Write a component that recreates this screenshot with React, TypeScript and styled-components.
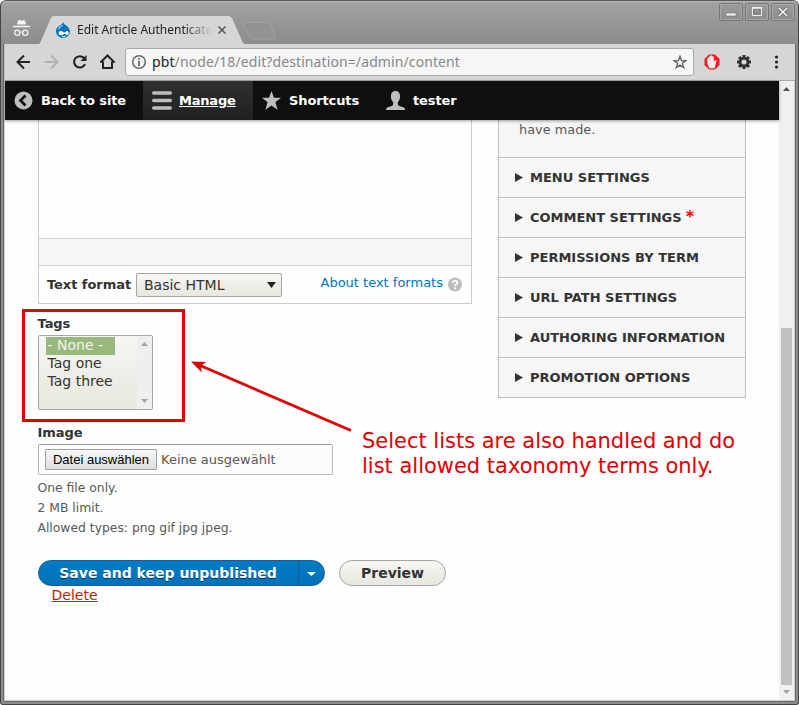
import React from 'react';
import styled, { createGlobalStyle } from 'styled-components';

const Global = createGlobalStyle`
  * { box-sizing: border-box; }
  html, body { margin: 0; padding: 0; background: #fff; overflow: hidden; }
  body { font-family: "DejaVu Sans", sans-serif; color: #333; }
  svg { display: block; flex: none; }
  p { margin: 0; }
`;

const Window = styled.div`
  position: relative;
  width: 799px;
  height: 705px;
  display: flex;
  flex-direction: column;
  overflow: hidden;
  border: 1px solid #454343;
  border-top-color: #5a5a5a;
  border-radius: 6px 6px 3px 3px;
  background: #8c8c8c;
  padding: 0 3px 3px;
`;

const TitleBar = styled.header`
  height: 43px;
  flex: none;
  display: flex;
  margin: 0 -3px;
  padding-left: 12px;
  background: linear-gradient(#b5b5b5 0, #a1a1a1 2px, #8c8c8c 100%);
`;

const Incognito = styled.div`
  width: 26px;
  padding-top: 18px;
`;

const TabShape = styled.div`
  width: 206px;
  height: 28px;
  margin-top: 15px;
  padding: 0 16px 0 17px;
  display: flex;
  align-items: center;
  background: #d6d6d6;
  clip-path: polygon(0 100%, 1px 27px, 12px 2px, 14px 0, 190px 0, 193px 2px, 204px 27px, 206px 100%);
`;

const TabTitle = styled.span`
  width: 141px;
  margin-left: 7px;
  white-space: nowrap;
  font: 12px/18px "Noto Sans", sans-serif;
  color: #222;
  mask-image: linear-gradient(90deg, #000 108px, transparent 135px);
`;

const NewTab = styled.div`
  margin: 20px 0 0 -3px;
`;

const WindowButtons = styled.div`
  margin: 2px 3px 0 auto;
  display: flex;
  gap: 2px;
`;

const WindowButton = styled.span`
  width: 24px;
  height: 18px;
  display: grid;
  place-items: center;
  border: 1px solid #767676;
  border-radius: 2px;
  background: linear-gradient(#9b9b9b, #8d8d8d);
  box-shadow: inset 0 0 0 1px #a9a9a9;
`;

const NavBar = styled.nav`
  height: 37px;
  flex: none;
  display: flex;
  align-items: center;
  padding: 0 11px 1px 11px;
  background: #d6d6d6;
  border-bottom: 1px solid #a9a9a9;
  border-left: 1px solid #c4c4c4;
  box-shadow: -1px 0 #6b6969, 1px 0 #6b6969;
`;

const NavButtons = styled.div`
  width: 109px;
  display: flex;
  gap: 13px;
`;

const AddressBar = styled.div`
  width: 569px;
  height: 28px;
  display: flex;
  align-items: center;
  padding: 0 6px 0 5px;
  border: 1px solid #a8a8a8;
  border-radius: 3px;
  background: #f6f6f6;
`;

const Url = styled.span`
  flex: 1;
  margin-left: 5px;
  font: 14px/20px "Noto Sans", sans-serif;
  letter-spacing: 0.1px;
  color: #888;
  b { font-weight: 400; color: #222; }
`;

const NavActions = styled.div`
  flex: 1;
  display: flex;
  align-items: center;
  padding-left: 10px;
  gap: 16px;
`;

const Viewport = styled.div`
  flex: 1;
  min-height: 0;
  display: flex;
  border: solid #cfcfcf;
  border-width: 0 1px 1px;
  box-shadow: -1px 0 #6b6969, 1px 0 #6b6969, 0 1px #6b6969;
  background: #fdfdfd;
`;

const Page = styled.div`
  width: 774px;
  display: flex;
  flex-direction: column;
`;

const AdminBar = styled.div`
  position: relative;
  height: 39px;
  flex: none;
  display: flex;
  background: #0f0f0f;
  box-shadow: 0 1px 3px 0 rgba(0, 0, 0, 0.4);
`;

const AdminItem = styled.a<{ $width: number; $active?: boolean }>`
  width: ${(p) => p.$width}px;
  display: flex;
  align-items: center;
  gap: ${(p) => (p.$active ? 7 : 8)}px;
  padding-left: 9px;
  color: #fff;
  font-size: 13px;
  font-weight: 700;
  letter-spacing: ${(p) => (p.$active ? -0.2 : -0.12)}px;
  text-decoration: ${(p) => (p.$active ? 'underline' : 'none')};
  background: ${(p) => (p.$active ? 'linear-gradient(#303030, #202020)' : 'none')};
  white-space: nowrap;
`;

const Columns = styled.div`
  flex: 1;
  min-height: 0;
  display: flex;
  align-items: flex-start;
  gap: 26px;
  padding-left: 33px;
`;

const Main = styled.main`
  width: 434px;
`;

const Editor = styled.section`
  height: 184px;
  border: 1px solid #ccc;
  border-top: 0;
  background: #fefefe;
`;

const EditorCanvas = styled.div`
  height: 118px;
`;

const EditorFooter = styled.div`
  height: 28px;
  background: #f6f6f6;
  border: solid #ccc;
  border-width: 1px 0;
`;

const FormatRow = styled.div`
  height: 37px;
  display: flex;
  align-items: center;
  padding: 1px 9px 0 8px;
`;

const Label = styled.label`
  display: block;
  font-size: 13px;
  line-height: 20px;
  font-weight: 700;
  letter-spacing: -0.05px;
  white-space: nowrap;
`;

const FieldLabel = styled(Label)`
  text-indent: -0.5px;
`;

const FormatSelect = styled.div`
  width: 146px;
  height: 24px;
  margin-left: auto;
  padding: 0 5px 0 7px;
  display: flex;
  align-items: center;
  justify-content: space-between;
  border: 1px solid #a6a6a6;
  border-radius: 2px;
  background: linear-gradient(#f6f6f3, #e7e7df);
  font-size: 14px;
`;

const FormatPicker = styled.div`
  width: 235px;
  display: flex;
  align-items: center;
`;

const AboutLink = styled.a`
  margin: -6px 5px 0 auto;
  font-size: 13px;
  color: #0074bd;
  white-space: nowrap;
`;

const TagsField = styled.div`
  margin-top: 10px;
`;

const ListBox = styled.div`
  width: 115px;
  height: 75px;
  margin-top: 1px;
  display: flex;
  border: 1px solid #a6a6a6;
  border-radius: 2px;
  background: linear-gradient(#f6f6f3, #e7e7df);
`;

const Options = styled.div`
  width: 98px;
  padding: 1px 0 0 7px;
`;

const Option = styled.div<{ $selected?: boolean }>`
  width: 69px;
  height: 18px;
  padding-left: 1.5px;
  font-size: 14px;
  line-height: 17px;
  white-space: nowrap;
  color: ${(p) => (p.$selected ? '#f2f5ee' : '#333')};
  background: ${(p) => (p.$selected ? '#9ab87c' : 'none')};
`;

const ListScroll = styled.div`
  flex: 1;
  display: flex;
  flex-direction: column;
  justify-content: space-between;
  align-items: center;
  padding: 6px 0;
  background: #efefef;
`;

const ImageField = styled.div`
  margin-top: 13px;
`;

const FileInput = styled.div`
  width: 295px;
  height: 31px;
  margin-top: 1px;
  padding-left: 6px;
  display: flex;
  align-items: center;
  gap: 4px;
  border: 1px solid #b8b8b8;
  border-top-color: #999;
  border-radius: 2px;
  background: #fcfcfa;
  font-size: 13px;
  color: #595959;
`;

const FileButton = styled.span`
  width: 112px;
  height: 21px;
  border: 1px solid #a0a0a0;
  border-radius: 1px;
  background: linear-gradient(#f6f6f6, #dedede);
  font: 13px/19px "Liberation Sans", Arial, sans-serif;
  text-align: center;
  color: #000;
  white-space: nowrap;
`;

const Description = styled.div`
  margin-top: 3px;
  font-size: 12.35px;
  line-height: 20px;
  text-indent: -0.5px;
  color: #595959;
`;

const Actions = styled.div`
  margin-top: 22px;
  display: flex;
  gap: 14px;
`;

const SplitButton = styled.div`
  width: 287px;
  height: 26px;
  display: flex;
  border: 1px solid #1e5c90;
  border-radius: 13px;
  background: linear-gradient(#007bc6, #0071b8);
  color: #fff;
  font-size: 14px;
  font-weight: 700;
  line-height: 24px;
  text-shadow: 0 1px rgba(0, 0, 0, 0.5);
  white-space: nowrap;
`;

const SplitMain = styled.span`
  width: 260px;
  padding-right: 1px;
  text-align: center;
  border-right: 1px solid #1e5c90;
`;

const SplitArrow = styled.span`
  flex: 1;
  display: grid;
  place-items: center;
  padding: 2px 1px 0 0;
`;

const PreviewButton = styled.span`
  width: 107px;
  height: 26px;
  border: 1px solid #a6a6a6;
  border-radius: 13px;
  background: linear-gradient(#f6f6f3, #e7e7df);
  font-size: 14px;
  font-weight: 700;
  line-height: 24px;
  text-align: center;
`;

const DeleteLink = styled.a`
  display: block;
  margin-left: 13.5px;
  font-size: 14px;
  line-height: 18px;
  color: #c72100;
  text-decoration: underline;
`;

const Sidebar = styled.aside`
  width: 248px;
  height: 278px;
  border: 1px solid #bfbfbf;
  border-top: 0;
  background: #f6f6f6;
`;

const SideNote = styled.p`
  height: 37px;
  padding-left: 20px;
  font-size: 12.9px;
  line-height: 20px;
  color: #595959;
`;

const Summary = styled.div`
  height: 40px;
  display: flex;
  align-items: center;
  gap: 7px;
  padding-left: 16px;
  border-top: 1px solid #bfbfbf;
  box-shadow: inset 0 1px #fff;
  font-size: 13px;
  font-weight: 700;
  white-space: nowrap;
  svg { margin-bottom: 1px; }
`;

const Required = styled.span`
  margin: 0 0 1px -3px;
  color: #f00;
  font-size: 16px;
  line-height: 18px;
`;

const ScrollTrack = styled.div`
  width: 15px;
  display: flex;
  flex-direction: column;
  align-items: center;
  padding-top: 6px;
  background: #f0f0f0;
`;

const ScrollThumb = styled.div`
  width: 11px;
  height: 357px;
  margin: 237px 0 5px;
  background: #c1c1c1;
`;

const RedFrame = styled.div`
  position: absolute;
  left: 21px;
  top: 308px;
  width: 163px;
  height: 113px;
  border: 3px solid #e00000;
`;

const RedArrow = styled.svg`
  position: absolute;
  left: 184px;
  top: 349px;
`;

const Note = styled.p`
  position: absolute;
  left: 361px;
  top: 428px;
  font-size: 20.97px;
  line-height: 25px;
  color: #e00000;
  white-space: nowrap;
`;

const Triangle = ({ dir, w, h, color }: { dir: 'up' | 'down' | 'right'; w: number; h: number; color: string }) => {
  const points = {
    up: `0,${h} ${w},${h} ${w / 2},0`,
    down: `0,0 ${w},0 ${w / 2},${h}`,
    right: `0,0 ${w},${h / 2} 0,${h}`,
  }[dir];
  return (
    <svg width={w} height={h}>
      <polygon points={points} fill={color} />
    </svg>
  );
};

const SECTIONS = [
  'MENU SETTINGS',
  'COMMENT SETTINGS',
  'PERMISSIONS BY TERM',
  'URL PATH SETTINGS',
  'AUTHORING INFORMATION',
  'PROMOTION OPTIONS',
];

const GEAR_TEETH = [0, 45, 90, 135, 180, 225, 270, 315];

export default function App() {
  return (
    <>
      <Global />
      <Window>
        <TitleBar>
          <Incognito>
            <svg width="17" height="18" viewBox="0 0 17 18" fill="none" stroke="#f4f4f4">
              <path d="M4.5 5 5.5 1.500 8.500 2.200l3-.7 1 3.500Z" fill="#f4f4f4" />
              <path d="M0 7.500h17" strokeWidth="1.300" />
              <circle cx="4.200" cy="13.800" r="2.600" strokeWidth="1.300" />
              <circle cx="12.300" cy="13.800" r="2.600" strokeWidth="1.300" />
              <path d="M7 13.300q1.200-.8 2.500 0" />
            </svg>
          </Incognito>
          <TabShape>
            <svg width="14" height="16" viewBox="0 0 14 16">
              <path d="M7.200 0c.6 2.300 2.300 2.800 4 4.200A6.700 6.700 0 0 1 14 9.200a6.900 6.800 0 0 1-14 0C0 6.300 1.500 4.900 3.300 3.800 5.200 2.500 6.500 1.800 7.200 0Z" fill="#0075be" />
              <path d="M2.400 7.500C2.800 5.500 5 4.200 6.700 3.400" stroke="#85c3e8" strokeWidth="1.300" fill="none" />
              <path d="M4.300 13.300c-2.300-.6-2.200-4.300.6-4.300 1.800 0 2.500 1.400 3.500 1.400s1.500-1.500 2.900-1.300c1.800.2 1.900 3.700.2 4-1 .2-1.900-1.100-2.900-1s-2.500 1.600-4.300 1.200Z" fill="#fff" />
              <path d="M6 14.400q1.800.8 3.500-.2" stroke="#fff" fill="none" />
            </svg>
            <TabTitle>Edit Article Authenticate</TabTitle>
            <svg width="8" height="8" viewBox="0 0 8 8" stroke="#555" strokeWidth="1.500">
              <path d="m.5.5 7 7m0-7-7 7" />
            </svg>
          </TabShape>
          <NewTab>
            <svg width="36" height="19" viewBox="0 0 36 19">
              <path d="M2.500 1.500H26q1.500 0 2.200 1.500l5.300 13.500q.3 1.500-1 1.500H10q-1.500 0-2.200-1.500L1.500 3q-.5-1.500 1-1.500Z" fill="#939393" stroke="#a1a1a1" />
            </svg>
          </NewTab>
          <WindowButtons>
            <WindowButton>
              <svg width="12" height="12"><path d="M1 7h10v3H1Z" fill="#eee" stroke="#777" strokeWidth=".6" /></svg>
            </WindowButton>
            <WindowButton>
              <svg width="12" height="12" fill="none"><path d="M1.500 1.500h9v8h-9z" stroke="#eee" /><path d="M3 3h6v5H3z" stroke="#777" /><path d="M1 2h10" stroke="#eee" strokeWidth="1.500" /></svg>
            </WindowButton>
            <WindowButton>
              <svg width="12" height="12" viewBox="0 0 12 12"><path d="m2 2 8 8m0-8-8 8" stroke="#6d6d6d" strokeWidth="3.200" /><path d="m2 2 8 8m0-8-8 8" stroke="#f2f2f2" strokeWidth="1.700" /></svg>
            </WindowButton>
          </WindowButtons>
        </TitleBar>

        <NavBar>
          <NavButtons>
            <svg width="15" height="16" viewBox="0 0 15 16" fill="none" stroke="#222" strokeWidth="2"><path d="M14 8H2M8 1.500 1.500 8 8 14.500" /></svg>
            <svg width="15" height="16" viewBox="0 0 15 16" fill="none" stroke="#b2b2b2" strokeWidth="2"><path d="M.5 8H13M7 1.500 13.500 8 7 14.500" /></svg>
            <svg width="15" height="16" viewBox="0 0 15 16" fill="none" stroke="#222" strokeWidth="2"><path d="M13 10.200A5.700 5.700 0 1 1 12 4" /><path d="M14.500 1v6h-6Z" fill="#222" stroke="none" /></svg>
            <svg width="16" height="16" viewBox="0.500 0 16 16" fill="none" stroke="#222" strokeWidth="2"><path d="M.8 8.600 8 1.500l7.200 7.100M3.500 7.500V14h9V7.500" /></svg>
          </NavButtons>
          <AddressBar>
            <svg width="16" height="16" viewBox="0 0 16 16" fill="none" stroke="#666" strokeWidth="1.500"><circle cx="8" cy="8" r="6.300" /><path d="M8 7v5M8 4v1.800" strokeWidth="1.800" /></svg>
            <Url><b>pbt</b>/node/18/edit?destination=/admin/content</Url>
            <svg width="14" height="14" viewBox="0 0 14 14" fill="none" stroke="#666" strokeWidth="1.400"><path d="m7 1.300 1.500 4.200 4.400.1-3.500 2.700 1.300 4.300L7 10.100l-3.700 2.500 1.300-4.300L1.100 5.600l4.400-.1Z" /></svg>
          </AddressBar>
          <NavActions>
            <svg width="16" height="16" viewBox="0 0 16 16">
              <path d="M5 .5h6L15.500 5v6L11 15.500H5L.5 11V5Z" fill="#ee1c1c" />
              <path d="M5.200 14.300 3.300 9.500V4.300q.7-.8 1.400 0V2.800q.8-.9 1.600 0V1.700q.9-.9 1.800 0v.8q.9-.7 1.700.2v5l1.200-1.500q1.600-.6 1.500.6L10.600 14.300Z" fill="#f2eded" />
              <path d="M4.900 4.500v3M6.500 3v4M8.200 3v4" stroke="#dcc6c6" strokeWidth=".5" />
            </svg>
            <svg width="16" height="16" viewBox="-8 -8 16 16">
              {GEAR_TEETH.map((a) => (
                <rect key={a} x="-1.500" y="-7" width="3" height="4" fill="#303030" transform={`rotate(${a})`} />
              ))}
              <circle r="3.900" fill="none" stroke="#303030" strokeWidth="2.600" />
            </svg>
            <svg width="16" height="14" viewBox="0 0 16 14" fill="#222"><circle cx="8.500" cy="2" r="1.600" /><circle cx="8.500" cy="7" r="1.600" /><circle cx="8.500" cy="12" r="1.600" /></svg>
          </NavActions>
        </NavBar>

        <Viewport>
          <Page>
            <AdminBar>
              <AdminItem $width={138}>
                <svg width="19" height="19" viewBox="0 0 19 19"><circle cx="9.500" cy="9.500" r="9" fill="#bebebe" /><path d="M11.500 4.500 6.500 9.500l5 5" fill="none" stroke="#0f0f0f" strokeWidth="2.700" /></svg>
                Back to site
              </AdminItem>
              <AdminItem $width={110} $active>
                <svg width="20" height="19" viewBox="0 0 20 19" stroke="#bebebe" strokeWidth="3.400" strokeLinecap="round"><path d="M1.700 2h16.600M1.700 9.500h16.600M1.700 17h16.600" /></svg>
                Manage
              </AdminItem>
              <AdminItem $width={124}>
                <svg width="19" height="19" viewBox="0 0 19 19"><path d="m9.500 0 2.500 6.700h7l-5.600 4.600 2.200 7.400-6.100-4.300-6.100 4.300 2.200-7.400L0 6.700h7Z" fill="#bebebe" /></svg>
                Shortcuts
              </AdminItem>
              <AdminItem $width={100}>
                <svg width="19" height="19" viewBox="0 0 19 19"><path d="M9.500 0c3 0 4.600 2 4.600 5.200 0 2.500-.8 4.300-1.900 5.600-.8 1-.5 3 .3 3.700 1.200 1 4.800 1.300 5.700 2.300.6.600.8 1.500.8 2.200H0c0-.7.200-1.600.8-2.200.9-1 4.500-1.300 5.700-2.300.8-.7 1.100-2.700.3-3.700-1.100-1.300-1.900-3.100-1.900-5.600C4.900 2 6.500 0 9.500 0Z" fill="#bebebe" /></svg>
                tester
              </AdminItem>
            </AdminBar>

            <Columns>
              <Main>
                <Editor>
                  <EditorCanvas />
                  <EditorFooter />
                  <FormatRow>
                    <FormatPicker>
                      <Label>Text format</Label>
                      <FormatSelect>
                        Basic HTML
                        <Triangle dir="down" w={9} h={6} color="#222" />
                      </FormatSelect>
                    </FormatPicker>
                    <AboutLink>About text formats</AboutLink>
                    <svg width="14" height="16" viewBox="0 0 14 16"><circle cx="7" cy="7.500" r="7" fill="#bdbdbd" /><path d="M4.700 6q0-2.300 2.300-2.300T9.300 5.700Q9.300 6.700 8 7.500q-1 .6-1 1.500M7 10.200v2" fill="none" stroke="#fff" strokeWidth="1.700" /></svg>
                  </FormatRow>
                </Editor>

                <TagsField>
                  <FieldLabel>Tags</FieldLabel>
                  <ListBox>
                    <Options>
                      <Option $selected>- None -</Option>
                      <Option>Tag one</Option>
                      <Option>Tag three</Option>
                    </Options>
                    <ListScroll>
                      <Triangle dir="up" w={7} h={4} color="#a3a3a3" />
                      <Triangle dir="down" w={7} h={4} color="#a3a3a3" />
                    </ListScroll>
                  </ListBox>
                </TagsField>

                <ImageField>
                  <FieldLabel>Image</FieldLabel>
                  <FileInput>
                    <FileButton>Datei auswählen</FileButton>
                    Keine ausgewählt
                  </FileInput>
                  <Description>
                    <p>One file only.</p>
                    <p>2 MB limit.</p>
                    <p>Allowed types: png gif jpg jpeg.</p>
                  </Description>
                </ImageField>

                <Actions>
                  <SplitButton>
                    <SplitMain>Save and keep unpublished</SplitMain>
                    <SplitArrow><Triangle dir="down" w={9} h={4} color="#fff" /></SplitArrow>
                  </SplitButton>
                  <PreviewButton>Preview</PreviewButton>
                </Actions>
                <DeleteLink>Delete</DeleteLink>
              </Main>

              <Sidebar>
                <SideNote>have made.</SideNote>
                {SECTIONS.map((title) => (
                  <Summary key={title}>
                    <Triangle dir="right" w={8} h={9} color="#333" />
                    {title}
                    {title === 'COMMENT SETTINGS' && <Required>*</Required>}
                  </Summary>
                ))}
              </Sidebar>
            </Columns>
          </Page>

          <ScrollTrack>
            <Triangle dir="up" w={7} h={4} color="#505050" />
            <ScrollThumb />
            <Triangle dir="down" w={7} h={4} color="#a3a3a3" />
          </ScrollTrack>
        </Viewport>

        <RedFrame />
        <RedArrow width="170" height="85" viewBox="0 0 170 85">
          <path d="M166 80.500 14 15" stroke="#e00000" strokeWidth="2.800" />
          <path d="m6 11.500 15 .6-5.200 3.900.9 6.400Z" fill="#e00000" />
        </RedArrow>
        <Note>Select lists are also handled and do<br />list allowed taxonomy terms only.</Note>
      </Window>
    </>
  );
}
